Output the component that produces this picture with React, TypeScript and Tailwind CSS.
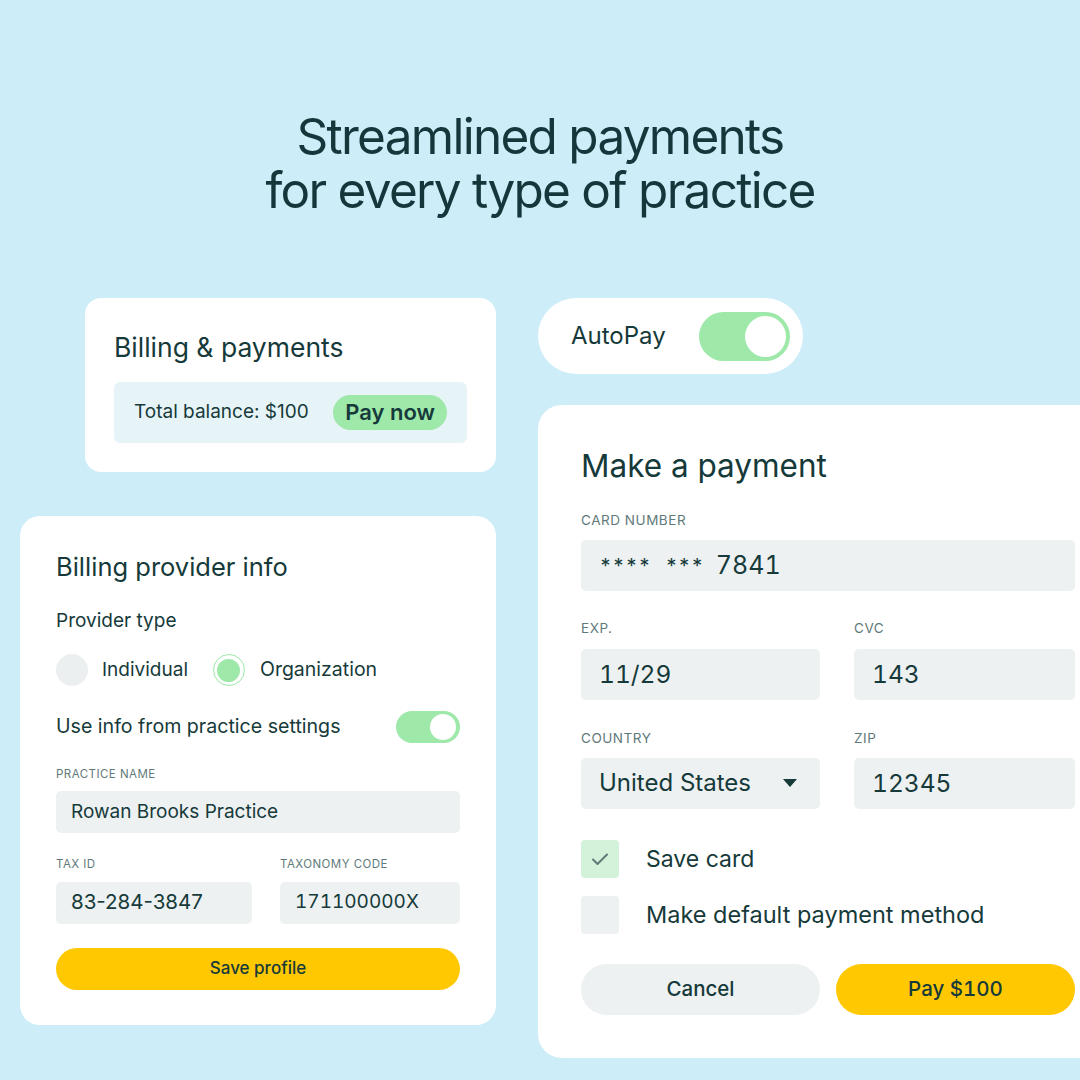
import React from "react";

const ink = "text-[#163a3a]";

function Label({ children, className = "" }: { children: React.ReactNode; className?: string }) {
  return (
    <div className={`uppercase tracking-[0.04em] text-[#5f7a7a] ${className}`}>{children}</div>
  );
}

function Field({ children, className = "" }: { children: React.ReactNode; className?: string }) {
  return (
    <div className={`flex items-center rounded-[5px] bg-[#edf1f2] ${ink} ${className}`}>{children}</div>
  );
}

function Toggle({ w, h, knob }: { w: string; h: string; knob: string }) {
  return (
    <div className={`flex items-center justify-end rounded-full bg-[#9ee8aa] pr-[4px] ${w} ${h}`}>
      <div className={`rounded-full bg-white ${knob}`} />
    </div>
  );
}

export default function App() {
  return (
    <div
      className={`w-[1080px] h-[1080px] overflow-hidden bg-[#cdedf8] ${ink}`}
      style={{ fontFamily: "Inter, 'Noto Sans', sans-serif" }}
    >
      <h1 className="pt-[109px] text-center text-[49.5px] leading-[54px] tracking-[-0.035em] font-normal text-[#15363a]">
        Streamlined payments
        <br />
        for every type of practice
      </h1>

      <div className="mt-[81px] flex">
        {/* left column */}
        <div className="ml-[20px] flex w-[476px] flex-col items-end">
          <div className="w-[411px] h-[174px] rounded-[16px] bg-white px-[29px] pt-[32px]">
            <div className="text-[26.5px] leading-[34px]">Billing &amp; payments</div>
            <div className="mt-[18px] flex h-[61px] items-center justify-between rounded-[6px] bg-[#e6f4f8] pl-[20px] pr-[20px]">
              <span className="text-[19px]">Total balance: $100</span>
              <span className="flex h-[35px] items-center rounded-full bg-[#9ee8aa] px-[12px] text-[22px] font-semibold">
                Pay now
              </span>
            </div>
          </div>

          <div className="mt-[44px] w-[476px] h-[509px] rounded-[20px] bg-white px-[36px] pt-[35px]">
            <div className="text-[25.5px] leading-[32px]">Billing provider info</div>
            <div className="mt-[26px] text-[19px] leading-[24px]">Provider type</div>
            <div className="mt-[21px] flex items-center">
              <div className="h-[32px] w-[32px] rounded-full bg-[#eceff0]" />
              <span className="ml-[14px] text-[19px]">Individual</span>
              <div className="ml-[25px] flex h-[32px] w-[32px] items-center justify-center rounded-full border-[1.5px] border-[#9ee8aa] bg-white">
                <div className="h-[23px] w-[23px] rounded-full bg-[#9ee8aa]" />
              </div>
              <span className="ml-[15px] text-[19.5px]">Organization</span>
            </div>
            <div className="mt-[25px] flex items-center justify-between">
              <span className="text-[19.6px]">Use info from practice settings</span>
              <Toggle w="w-[64px]" h="h-[32px]" knob="h-[26px] w-[26px]" />
            </div>
            <Label className="mt-[23px] text-[11.5px]">Practice name</Label>
            <Field className="mt-[8px] h-[42px] pl-[15px] text-[19px]">Rowan Brooks Practice</Field>
            <div className="mt-[23px] flex gap-[28px]">
              <div className="w-[196px]">
                <Label className="text-[11.5px]">Tax ID</Label>
                <Field className="mt-[8px] h-[42px] pl-[15px] text-[20.5px]">83-284-3847</Field>
              </div>
              <div className="flex-1">
                <Label className="text-[11.5px]">Taxonomy code</Label>
                <Field className="mt-[8px] h-[42px] pl-[15px] text-[19px] tabular-nums">171100000X</Field>
              </div>
            </div>
            <div className="mt-[24px] flex h-[42px] items-center justify-center rounded-full bg-[#ffc800] text-[17px] font-medium">
              Save profile
            </div>
          </div>
        </div>

        {/* right column */}
        <div className="ml-[42px] flex flex-col">
          <div className="flex h-[76px] w-[265px] items-center justify-between rounded-full bg-white pl-[33px] pr-[13px]">
            <span className="text-[24px]">AutoPay</span>
            <Toggle w="w-[91px]" h="h-[49px]" knob="h-[41px] w-[41px]" />
          </div>

          <div className="mt-[31px] w-[580px] h-[653px] rounded-[24px] bg-white pl-[43px] pr-[43px] pt-[42px]">
            <div className="text-[31.5px] leading-[38px]">Make a payment</div>
            <Label className="mt-[25px] text-[13.5px]">Card number</Label>
            <Field className="mt-[10px] h-[51px] pl-[18px] text-[25px] tabular-nums">
              <span className="mr-[14px] text-[20px]">****</span>
              <span className="mr-[12px] text-[20px]">***</span>
              <span>7841</span>
            </Field>
            <div className="mt-[27px] flex gap-[34px]">
              <div className="w-[239px]">
                <Label className="text-[13.5px]">Exp.</Label>
                <Field className="mt-[10px] h-[51px] pl-[18px] text-[24.5px] tabular-nums">11/29</Field>
              </div>
              <div className="flex-1">
                <Label className="text-[13.5px]">CVC</Label>
                <Field className="mt-[10px] h-[51px] pl-[18px] text-[24.5px] tabular-nums">143</Field>
              </div>
            </div>
            <div className="mt-[28px] flex gap-[34px]">
              <div className="w-[239px]">
                <Label className="text-[13.5px]">Country</Label>
                <Field className="mt-[10px] h-[51px] justify-between pl-[18px] pr-[22px] text-[24px]">
                  <span>United States</span>
                  <svg width="16" height="10" viewBox="0 0 16 10">
                    <path d="M1 1 H15 L8.5 8.6 Q8 9.2 7.5 8.6 Z" fill="#163a3a" />
                  </svg>
                </Field>
              </div>
              <div className="flex-1">
                <Label className="text-[13.5px]">ZIP</Label>
                <Field className="mt-[10px] h-[51px] pl-[18px] text-[24.5px] tabular-nums">12345</Field>
              </div>
            </div>
            <div className="mt-[31px] flex items-center">
              <div className="flex h-[38px] w-[38px] items-center justify-center rounded-[4px] bg-[#d3f2da]">
                <svg width="18" height="14" viewBox="0 0 18 14">
                  <path d="M2 7.5 L6.5 12 L16 2.5" fill="none" stroke="#5f7a7a" strokeWidth="2" strokeLinecap="round" strokeLinejoin="round" />
                </svg>
              </div>
              <span className="ml-[27px] text-[23px]">Save card</span>
            </div>
            <div className="mt-[18px] flex items-center">
              <div className="h-[38px] w-[38px] rounded-[4px] bg-[#edf1f2]" />
              <span className="ml-[27px] text-[23.5px]">Make default payment method</span>
            </div>
            <div className="mt-[30px] flex gap-[16px]">
              <div className="flex h-[51px] w-[239px] items-center justify-center rounded-full bg-[#edf1f2] text-[20.5px] font-medium">
                Cancel
              </div>
              <div className="flex h-[51px] flex-1 items-center justify-center rounded-full bg-[#ffc800] text-[20.5px] font-medium tabular-nums">
                Pay $100
              </div>
            </div>
          </div>
        </div>
      </div>
    </div>
  );
}
